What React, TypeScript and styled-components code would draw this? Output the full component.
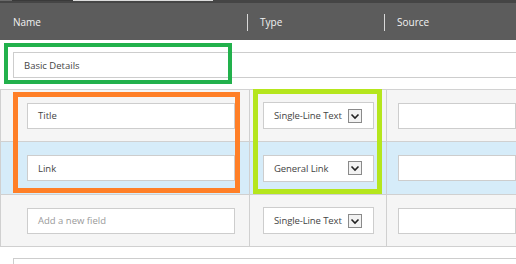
import React from "react";
import styled, { createGlobalStyle } from "styled-components";

const Global = createGlobalStyle`
  html, body { margin: 0; padding: 0; background: #fff; }
  body { font-family: "Open Sans", "Noto Sans", sans-serif; font-size: 10px; color: #333; }
  * { box-sizing: border-box; }
`;

const Page = styled.div`
  position: relative;
  width: 516px;
  height: 264px;
  overflow: hidden;
  background: #fff;
`;

const TopStrip = styled.div`
  height: 3px;
  background: #454545;
  display: flex;
  align-items: flex-start;
`;

const TopSeg = styled.div<{ $w: number; $c: string }>`
  width: ${(p) => p.$w}px;
  height: 1px;
  background: ${(p) => p.$c};
`;

const Header = styled.div`
  height: 37px;
  background: #5c5c5c;
  display: grid;
  grid-template-columns: 248px 137px 1fr;
  align-items: center;
`;

const HeaderCell = styled.div<{ $divider?: boolean; $pad: number }>`
  position: relative;
  padding-left: ${(p) => p.$pad}px;
  color: #f2f2f2;
  font-size: 10px;
  line-height: 16px;
  &::before {
    content: "";
    display: ${(p) => (p.$divider ? "block" : "none")};
    position: absolute;
    left: -1px;
    top: 0;
    width: 1px;
    height: 17px;
    background: #d8d8d8;
  }
`;

const SectionRow = styled.div`
  height: 50px;
  padding: 12px 0 0 13px;
  border-bottom: 1px solid #d2d2d2;
`;

const Input = styled.div<{ $w?: number; $placeholder?: boolean }>`
  height: 26px;
  width: ${(p) => (p.$w ? `${p.$w}px` : "700px")};
  border: 1px solid #cdcdcd;
  background: #fff;
  display: flex;
  align-items: center;
  padding-left: 10px;
  color: ${(p) => (p.$placeholder ? "#9a9a9a" : "#444")};
  font-size: 9.5px;
  white-space: nowrap;
`;

const Row = styled.div<{ $bg: string; $h: number }>`
  display: grid;
  grid-template-columns: 249px 137px 1fr;
  height: ${(p) => p.$h}px;
  background: ${(p) => p.$bg};
  border-bottom: 1px solid #d0d0d0;
  border-left: 1px solid #d0d0d0;
`;

const Cell = styled.div<{ $pl: number; $divider?: boolean }>`
  display: flex;
  align-items: center;
  padding-left: ${(p) => p.$pl}px;
  border-right: ${(p) => (p.$divider ? "1px solid #d0d0d0" : "none")};
  overflow: hidden;
`;

const Select = styled.div`
  width: 111px;
  height: 27px;
  border: 1px solid #cdcdcd;
  background: #fff;
  display: flex;
  align-items: center;
  justify-content: space-between;
  padding: 0 11px 0 10px;
  color: #444;
  font-size: 9.5px;
  white-space: nowrap;
`;

const SelectLabel = styled.span`
  letter-spacing: -0.1px;
`;

const ArrowBox = styled.div`
  flex: none;
  width: 14px;
  height: 14px;
  border: 1px solid #8a8a8a;
  background: #f2f2f2;
  display: flex;
  align-items: center;
  justify-content: center;
`;

const BottomArea = styled.div`
  padding: 11px 0 0 13px;
`;

const Highlight = styled.div<{ $x: number; $y: number; $w: number; $h: number; $c: string; $b: number }>`
  position: absolute;
  left: ${(p) => p.$x}px;
  top: ${(p) => p.$y}px;
  width: ${(p) => p.$w}px;
  height: ${(p) => p.$h}px;
  border: ${(p) => p.$b}px solid ${(p) => p.$c};
  pointer-events: none;
`;

const Chevron = () => (
  <svg width="10" height="8" viewBox="0 0 10 8">
    <path d="M1.5 2.5 L5 6 L8.5 2.5" fill="none" stroke="#222" strokeWidth="1.6" />
  </svg>
);

const TypeSelect = ({ label }: { label: string }) => (
  <Select>
    <SelectLabel>{label}</SelectLabel>
    <ArrowBox>
      <Chevron />
    </ArrowBox>
  </Select>
);

type Field = { name: string; type: string; bg: string; h: number; placeholder?: boolean };

const fields: Field[] = [
  { name: "Title", type: "Single-Line Text", bg: "#f5f5f5", h: 52 },
  { name: "Link", type: "General Link", bg: "#d6ecf9", h: 53 },
  { name: "Add a new field", type: "Single-Line Text", bg: "#f5f5f5", h: 52, placeholder: true },
];

export default function App() {
  return (
    <Page>
      <Global />
      <TopStrip>
        <TopSeg $w={12} $c="#6a6a6a" />
        <TopSeg $w={61} $c="#3a3a3a" />
        <TopSeg $w={140} $c="#dcdcdc" />
      </TopStrip>
      <Header>
        <HeaderCell $pad={13}>Name</HeaderCell>
        <HeaderCell $pad={12} $divider>Type</HeaderCell>
        <HeaderCell $pad={12} $divider>Source</HeaderCell>
      </Header>
      <SectionRow>
        <Input>Basic Details</Input>
      </SectionRow>
      {fields.map((f) => (
        <Row key={f.name} $bg={f.bg} $h={f.h}>
          <Cell $pl={26} $divider>
            <Input $w={208} $placeholder={f.placeholder}>{f.name}</Input>
          </Cell>
          <Cell $pl={13} $divider>
            <TypeSelect label={f.type} />
          </Cell>
          <Cell $pl={11}>
            <Input $w={200} />
          </Cell>
        </Row>
      ))}
      <BottomArea>
        <Input />
      </BottomArea>
      <Highlight $x={4} $y={43} $w={228} $h={41} $c="#22b14c" $b={4} />
      <Highlight $x={13} $y={92} $w={227} $h={101} $c="#ff7f27" $b={5} />
      <Highlight $x={253} $y={89} $w={129} $h={105} $c="#b5e61d" $b={5} />
    </Page>
  );
}
